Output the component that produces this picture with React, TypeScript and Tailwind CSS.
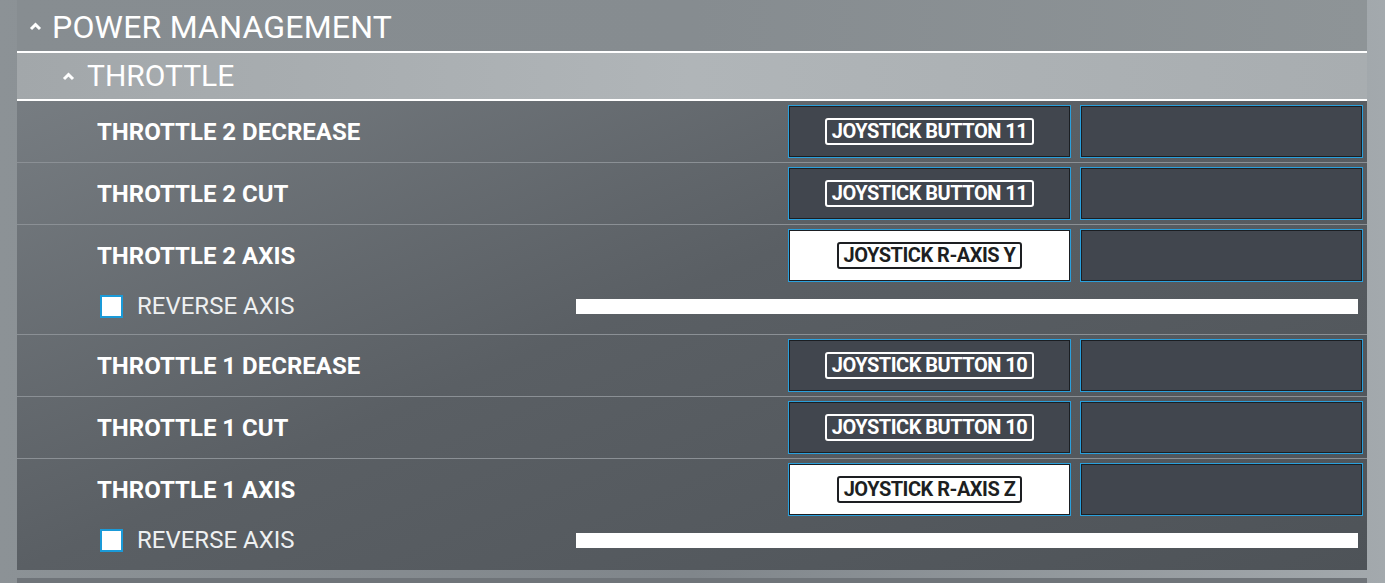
import React from 'react'

type Row =
  | { kind: 'key'; label: string; key1: string }
  | { kind: 'axis'; label: string; key1: string }

const rows: Row[] = [
  { kind: 'key', label: 'THROTTLE 2 DECREASE', key1: 'JOYSTICK BUTTON 11' },
  { kind: 'key', label: 'THROTTLE 2 CUT', key1: 'JOYSTICK BUTTON 11' },
  { kind: 'axis', label: 'THROTTLE 2 AXIS', key1: 'JOYSTICK R-AXIS Y' },
  { kind: 'key', label: 'THROTTLE 1 DECREASE', key1: 'JOYSTICK BUTTON 10' },
  { kind: 'key', label: 'THROTTLE 1 CUT', key1: 'JOYSTICK BUTTON 10' },
  { kind: 'axis', label: 'THROTTLE 1 AXIS', key1: 'JOYSTICK R-AXIS Z' },
]

function Caret() {
  return (
    <svg width="13" height="9" viewBox="0 0 13 9" className="shrink-0">
      <path d="M2 7 L6.5 2.5 L11 7" stroke="white" strokeWidth="3" fill="none" strokeLinejoin="miter" />
    </svg>
  )
}

function Binding({ text, active }: { text: string; active: boolean }) {
  return (
    <div
      className={
        active
          ? 'w-[283px] h-[53px] flex items-center justify-center bg-white border border-[#2aa0dc] shadow-[inset_0_0_0_1px_#1b1e22]'
          : 'w-[283px] h-[53px] flex items-center justify-center bg-[#41464e] border border-[#2aa0dc] shadow-[inset_0_0_0_1px_#1b1e22]'
      }
    >
      {text && (
        <span
          className={
            active
              ? 'px-[5px] h-[27px] leading-[23px] border-2 border-[#1d1f22] rounded-[3px] text-[#1d1f22] text-[20px] font-bold tracking-[-0.5px]'
              : 'px-[5px] h-[27px] leading-[23px] border-2 border-white rounded-[3px] text-white text-[20px] font-bold tracking-[-0.5px]'
          }
        >
          {text}
        </span>
      )}
    </div>
  )
}

function Bindings({ row }: { row: Row }) {
  return (
    <div className="ml-auto flex gap-[9px] pr-[4px]">
      <Binding text={row.key1} active={row.kind === 'axis'} />
      <Binding text="" active={false} />
    </div>
  )
}

export default function App() {
  return (
    <div
      className="w-[1385px] h-[583px] overflow-hidden bg-gradient-to-r from-[#8c9296] via-[#80868b] to-[#a3a9ad] pl-[17px] pr-[18px] text-white"
      style={{ fontFamily: 'Roboto, "Noto Sans", sans-serif' }}
    >
      <div className="bg-gradient-to-br from-[#7d8388] via-[#5a5f64] to-[#4e5358]">
        {/* section header */}
        <div className="h-[53px] flex items-center gap-[10px] pl-[12px] pt-[2px] bg-gradient-to-r from-[#878d91] via-[#868c90] to-[#8e9497] border-b-2 border-white">
          <Caret />
          <span className="text-[32px] font-normal leading-none tracking-[0.2px]">POWER MANAGEMENT</span>
        </div>
        {/* sub header */}
        <div className="h-[48px] flex items-center gap-[12px] pl-[45px] bg-gradient-to-r from-[#a2a7aa] via-[#b0b5b8] to-[#a8adb0] border-b-2 border-white">
          <Caret />
          <span className="text-[30px] font-normal leading-none">THROTTLE</span>
        </div>

        {rows.map((row, i) => (
          <div
            key={i}
            className={i < rows.length - 1 ? 'border-b border-[#8b9095]' : 'border-b-2 border-transparent'}
          >
            <div className="h-[61px] flex items-center">
              <span className="pl-[80px] text-[24px] font-bold">{row.label}</span>
              <Bindings row={row} />
            </div>
            {row.kind === 'axis' && (
              <div className="h-[48px] pb-[8px] flex items-center">
                <div className="ml-[83px] w-[23px] h-[23px] bg-white border-2 border-[#1a9ad8]" />
                <span className="ml-[14px] text-[24px] font-normal text-[#eef0f1]">REVERSE AXIS</span>
                <div className="ml-auto mr-[9px] w-[782px] h-[15px] bg-white" />
              </div>
            )}
          </div>
        ))}
      </div>
      <div className="h-[8px]" />
      <div className="h-[20px] bg-[#6f7479]" />
    </div>
  )
}
